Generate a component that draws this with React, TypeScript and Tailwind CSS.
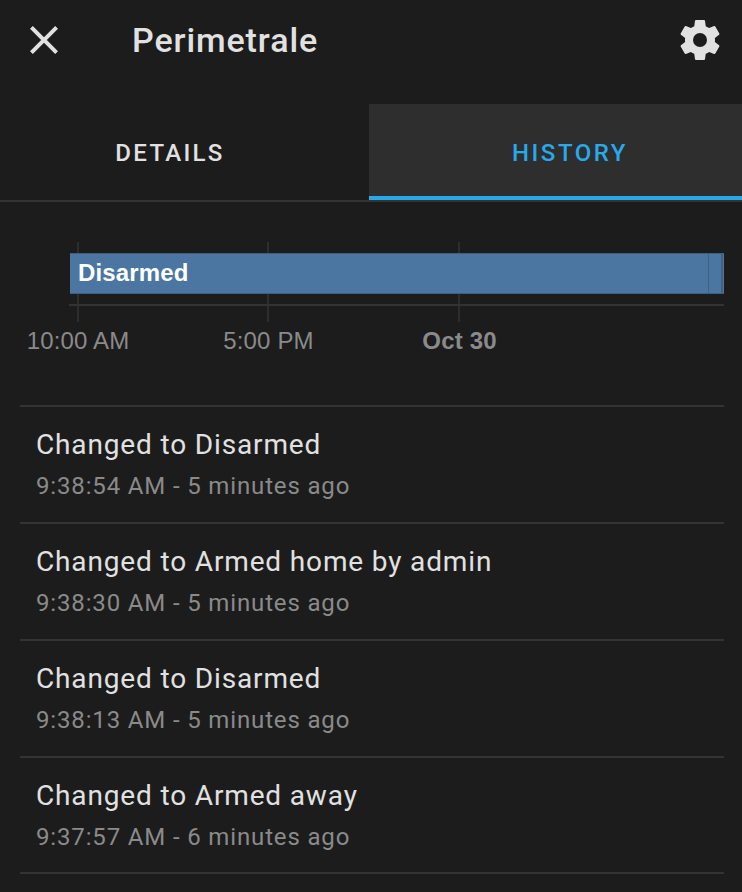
const CLOSE_PATH = "M19,6.41L17.59,5L12,10.59L6.41,5L5,6.41L10.59,12L5,17.59L6.41,19L12,13.41L17.59,19L19,17.59L13.41,12L19,6.41Z"
const COG_PATH = "M12,15.5A3.5,3.5 0 0,1 8.5,12A3.5,3.5 0 0,1 12,8.5A3.5,3.5 0 0,1 15.5,12A3.5,3.5 0 0,1 12,15.5M19.43,12.97C19.47,12.65 19.5,12.33 19.5,12C19.5,11.67 19.47,11.34 19.43,11L21.54,9.37C21.73,9.22 21.78,8.95 21.66,8.73L19.66,5.27C19.54,5.05 19.27,4.96 19.05,5.05L16.56,6.05C16.04,5.66 15.5,5.32 14.87,5.07L14.5,2.42C14.46,2.18 14.25,2 14,2H10C9.75,2 9.54,2.18 9.5,2.42L9.13,5.07C8.5,5.32 7.96,5.66 7.44,6.05L4.95,5.05C4.73,4.96 4.46,5.05 4.34,5.27L2.34,8.73C2.21,8.95 2.27,9.22 2.46,9.37L4.57,11C4.53,11.34 4.5,11.67 4.5,12C4.5,12.33 4.53,12.65 4.57,12.97L2.46,14.63C2.27,14.78 2.21,15.05 2.34,15.27L4.34,18.73C4.46,18.95 4.73,19.03 4.95,18.95L7.44,17.94C7.96,18.34 8.5,18.68 9.13,18.93L9.5,21.58C9.54,21.82 9.75,22 10,22H14C14.25,22 14.46,21.82 14.5,21.58L14.87,18.93C15.5,18.67 16.04,18.34 16.56,17.94L19.05,18.95C19.27,19.03 19.54,18.95 19.66,18.73L21.66,15.27C21.78,15.05 21.73,14.78 21.54,14.63L19.43,12.97Z"

const entries = [
  { title: "Changed to Disarmed", time: "9:38:54 AM - 5 minutes ago" },
  { title: "Changed to Armed home by admin", time: "9:38:30 AM - 5 minutes ago" },
  { title: "Changed to Disarmed", time: "9:38:13 AM - 5 minutes ago" },
  { title: "Changed to Armed away", time: "9:37:57 AM - 6 minutes ago" },
]

function Icon({ d }: { d: string }) {
  return (
    <svg viewBox="0 0 24 24" className="h-12 w-12 fill-[#e1e1e1]">
      <path d={d} />
    </svg>
  )
}

function Timeline() {
  const ticks = [78, 268, 459]
  return (
    <svg width="742" height="203" viewBox="0 0 742 203" className="block">
      {/* y is offset by 202 from the page */}
      {ticks.map((x) => (
        <line key={x} x1={x} x2={x} y1="40" y2="120" stroke="#333333" strokeWidth="1.5" />
      ))}
      <line x1="69" x2="724" y1="103" y2="103" stroke="#333333" strokeWidth="2" />
      <rect x="70" y="51" width="654" height="41" fill="#4a76a1" />
      <rect x="70" y="51" width="654" height="1" fill="#3f5f80" />
      <rect x="70" y="91" width="654" height="1" fill="#3f5f80" />
      <rect x="708" y="52" width="1" height="39" fill="#45607f" />
      <rect x="721" y="52" width="2" height="39" fill="#45607f" />
      <g fontFamily="'Liberation Sans', Arial, sans-serif" letterSpacing="0.15">
        <text x="78" y="79" fontSize="24" fontWeight="700" fill="#ffffff">Disarmed</text>
        <g fontSize="24" fill="#8a8a8a" textAnchor="middle">
          <text x="78" y="147">10:00 AM</text>
          <text x="268.5" y="147">5:00 PM</text>
          <text x="459.5" y="147" fontWeight="700">Oct 30</text>
        </g>
      </g>
    </svg>
  )
}

export default function App() {
  return (
    <div className="h-[892px] w-[742px] overflow-hidden bg-[#1c1c1c] font-['Roboto',sans-serif] text-[#e1e1e1]">
      <header className="flex h-[104px] items-start justify-between pt-4 pl-5 pr-[18px]">
        <div className="flex items-center">
          <Icon d={CLOSE_PATH} />
          <h1 className="ml-[64px] text-[34px] font-medium leading-[48px] tracking-[0.9px]">Perimetrale</h1>
        </div>
        <Icon d={COG_PATH} />
      </header>

      <nav className="flex h-[98px] border-b-2 border-[#333333]">
        <div className="flex h-24 w-[369px] items-center justify-center pt-px pr-[29px] text-2xl font-medium tracking-[2.3px]">DETAILS</div>
        <div className="flex h-24 flex-1 items-center justify-center border-b-4 border-[#27a9ec] bg-[#2e2e2e] pt-[5px] pl-[29px] text-2xl font-medium tracking-[2.5px] text-[#27a9ec]">HISTORY</div>
      </nav>

      <Timeline />

      <ul className="ml-5 mr-[18px] border-t-2 border-[#333333]">
        {entries.map((e, i) => (
          <li key={i} className="h-[116.85px] border-b-2 border-[#333333] pt-5">
            <div className="pl-4 text-[28px] leading-[36px] tracking-[0.85px]">{e.title}</div>
            <div className="mt-[5px] pl-4 text-2xl leading-[36px] tracking-[0.85px] text-[#8a8a8a]">{e.time}</div>
          </li>
        ))}
      </ul>
    </div>
  )
}
